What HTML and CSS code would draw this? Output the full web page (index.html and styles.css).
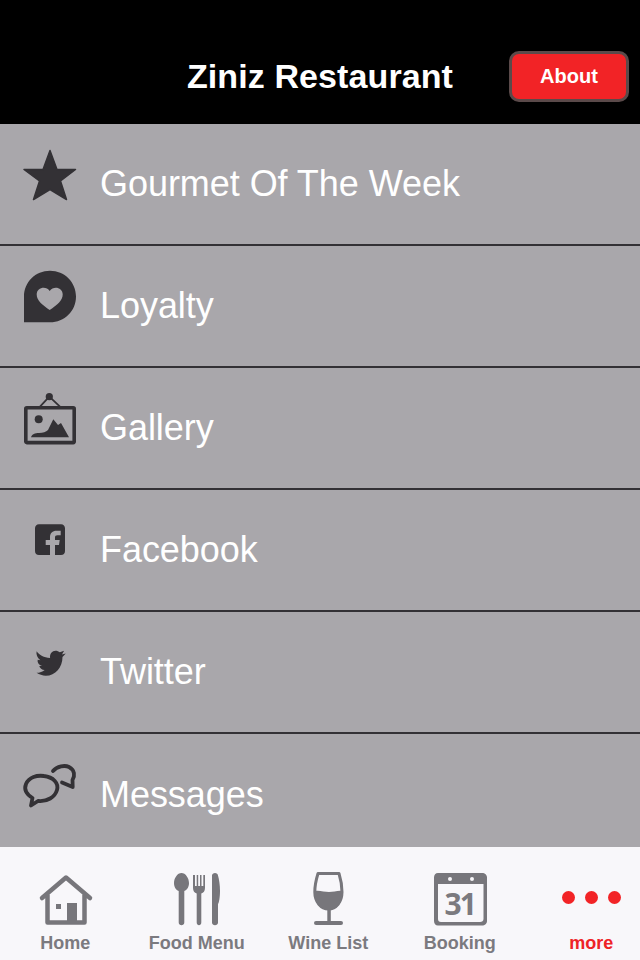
FILE: index.html
```html
<!DOCTYPE html>
<html lang="en">
<head>
  <meta charset="UTF-8" />
  <meta name="viewport" content="width=device-width, initial-scale=1" />
  <title>Ziniz Restaurant</title>
  <link rel="stylesheet" href="styles.css">
</head>
<body>

  <div class="app">
    <div class="header">
      <div class="title">Ziniz Restaurant</div>
      <button class="about">About</button>
    </div>

    <div class="list">
      <div class="row">
        <svg class="row-icon" viewBox="0 0 60 60"><path fill="#333135" stroke="#333135" stroke-width="1.500" stroke-linejoin="round" d="M30 5.500 37 24.500H55.500L40.500 36 46.500 54.500 30 44.500 13.500 54.500 19.500 36 4 24.500H23z"/></svg>
        <span class="row-text">Gourmet Of The Week</span>
      </div>
      <div class="row">
        <svg class="row-icon" viewBox="0 0 60 60"><path fill="#333135" fill-rule="evenodd" d="M4 29.500C4 15 15.500 3.700 30 3.700S56 15 56 29.500 44.500 55.300 30 55.300H4zM29.700 43C37 38 42.700 33.500 42.700 27.500 42.700 20.500 33.500 18.500 29.700 24 26 18.500 16.700 20.500 16.700 27.500 16.700 33.500 22.500 38 29.700 43z"/></svg>
        <span class="row-text">Loyalty</span>
      </div>
      <div class="row">
        <svg class="row-icon" viewBox="0 0 60 60">
          <circle cx="29.300" cy="7.700" r="3.600" fill="#333135"/>
          <path d="M29.300 7.700 20 17.700M29.300 7.700 40 17.700" stroke="#333135" stroke-width="1.800" fill="none"/>
          <rect x="5.800" y="18.800" width="48.400" height="34.800" rx="1" fill="none" stroke="#333135" stroke-width="3.600"/>
          <circle cx="18.700" cy="30.300" r="4" fill="#333135"/>
          <path fill="#333135" d="M11 48.300C12 45 15 44 19 44 23 44 26 43 28 41L33.300 30.300 38 36 41 34 49 48.300z"/>
        </svg>
        <span class="row-text">Gallery</span>
      </div>
      <div class="row">
        <svg class="row-icon" viewBox="0 0 60 60"><path fill="#333135" fill-rule="evenodd" d="M19 13.300H41C43.500 13.300 45 15 45 17.300V40C45 42.500 43.500 44 41 44H35V34H39L39.700 29H35V26.500C35 25 35.700 24.300 37.500 24.300H40.700V19.700H36.500C32.500 19.700 30 22 30 26V29H25.700V34H30V44H19C16.500 44 15 42.500 15 40V17.300C15 15 16.500 13.300 19 13.300z"/></svg>
        <span class="row-text">Facebook</span>
      </div>
      <div class="row">
        <svg class="row-icon" viewBox="0 0 60 60"><path fill="#333135" transform="translate(15.500 12.500) scale(0.54 0.57)" d="M2 10c6 7 13 11 25 12-1-8 4-13 10-13 3 0 6 1 8 3l8-3-4 7 7-2-6 6c0 18-13 33-31 33-6 0-12-2-17-5 6 0 11-2 15-5-5 0-9-3-10-7h5C6 34 3 30 4 25l5 1C3 21 1 16 2 10z"/></svg>
        <span class="row-text">Twitter</span>
      </div>
      <div class="row">
        <svg class="row-icon" viewBox="0 0 60 60" fill="none" stroke="#333135" stroke-width="3.800" stroke-linejoin="round" stroke-linecap="round">
          <path d="M11 49.500 12.500 42C6 38 4 33 6 28 9 21 17 19 24 20 33 21 39 27 37 34 35 41 27 46 18 45z"/>
          <path d="M33 15C37 10 45 9 49 11 55 14 55 20 52.500 24L52.700 31 42 26.500"/>
        </svg>
        <span class="row-text">Messages</span>
      </div>
    </div>

    <div class="tabs">
      <div class="tab">
        <svg class="tab-icon" viewBox="0 0 60 60"><path fill="none" stroke="#77767b" stroke-width="4.500" stroke-linejoin="round" stroke-linecap="round" d="M7 27 31 6.500 55 27M12.500 24V51.500H49.500V24"/><path fill="#77767b" d="M32 32H42V52H32zM21 33H26V38H21z"/></svg>
        <span>Home</span>
      </div>
      <div class="tab">
        <svg class="tab-icon" viewBox="0 0 60 60"><path fill="#77767b" d="M14.500 2C18.500 2 22 7 22 12 22 16 20 19 17.300 20V51.500C17.300 55 11.700 55 11.700 51.500V20C9 19 7 16 7 12 7 7 10.500 2 14.500 2zM26 4H28V15H29.700V4H31.200V15H33V4H34.500V15H36.300V4H38V17C38 20 36.500 22 34.300 22.500V51.500C34.300 55 29.700 55 29.700 51.500V22.500C27.500 22 26 20 26 17zM45 4.500C45 1 51 1 51 4.500 52 8 53 14 53 20 53 26 52 32 51 33V51.500C51 55 45 55 45 51.500z"/></svg>
        <span>Food Menu</span>
      </div>
      <div class="tab">
        <svg class="tab-icon" viewBox="0 0 60 60"><path fill="none" stroke="#77767b" stroke-width="3" stroke-linejoin="round" d="M20 2.500H41C43 9 44 15 44 21 44 31 38 38 30.500 38 23 38 16.800 31 16.800 21 16.800 15 18 9 20 2.500z"/><path fill="#77767b" d="M16 20C22 19 26 21 31 21 36 21 40 19 45 20 45 31 39 39 31 39 22 39 16 31 16 20zM29.300 38H32.800V51H29.300z"/><rect x="16" y="50" width="29" height="4" rx="2" fill="#77767b"/></svg>
        <span>Wine List</span>
      </div>
      <div class="tab">
        <svg class="tab-icon" viewBox="0 0 60 60"><path fill="#77767b" fill-rule="evenodd" d="M8 2H52C55 2 57 4 57 6.500V50C57 52.500 55 54.500 52 54.500H8C5.500 54.500 4 52.500 4 50V6.500C4 4 5.500 2 8 2zM8 13V48C8 50 9 51 11 51H50C52 51 53.500 50 53.500 48V13zM20 6A2 2 0 1 0 20 10 2 2 0 0 0 20 6zM42 6A2 2 0 1 0 42 10 2 2 0 0 0 42 6z"/></svg>
        <span class="cal-day">31</span>
        <span>Booking</span>
      </div>
      <div class="tab more">
        <div class="dots"><i></i><i></i><i></i></div>
        <span>more</span>
      </div>
    </div>
  </div>

</body>
</html>
```

FILE: styles.css
```css
* {
  box-sizing: border-box;
  margin: 0;
  padding: 0;
}
body {
  font-family: 'Liberation Sans', Arial, sans-serif;
  background: #000;
  overflow: hidden;
}
.app {
  width: 640px;
  height: 960px;
  display: flex;
  flex-direction: column;
  overflow: hidden;
}
.header {
  height: 124px;
  flex: none;
  background: #000;
  position: relative;
  padding-top: 40px;
  text-align: center;
}
.title {
  color: #fff;
  font-size: 34px;
  font-weight: bold;
  line-height: 72px;
  letter-spacing: 0.1px;
}
.about {
  position: absolute;
  left: 509px;
  top: 51px;
  width: 120px;
  height: 51px;
  background: #f22326;
  color: #fff;
  border: 3px solid #5b4a4a;
  border-radius: 10px;
  font-family: inherit;
  font-size: 20px;
  font-weight: bold;
}
.list {
  flex: 1;
  background: #a9a7ab;
  overflow: hidden;
}
.row {
  height: 122px;
  display: flex;
  align-items: center;
  padding-left: 20px;
  border-bottom: 2px solid #333135;
}
.row:last-child {
  border-bottom: none;
}
.row-icon {
  width: 60px;
  height: 60px;
  flex: none;
  margin-top: -18px;
}
.row-text {
  color: #fff;
  font-size: 36px;
  letter-spacing: -0.05px;
  margin-left: 20px;
}
.tabs {
  height: 113px;
  flex: none;
  background: #f8f7fa;
  display: flex;
  margin-left: -0.5px;
}
.tab {
  width: 131.5px;
  flex: none;
  position: relative;
  display: flex;
  flex-direction: column;
  align-items: center;
  padding-top: 24px;
  color: #7b7a7f;
  font-size: 18px;
  font-weight: bold;
}
.tab-icon {
  width: 60px;
  height: 60px;
  margin-bottom: 2px;
}
.cal-day {
  position: absolute;
  top: 42px;
  font-family: 'Open Sans', sans-serif;
  font-size: 30px;
  line-height: 30px;
  letter-spacing: -2px;
}
.more {
  color: #ee2326;
}
.dots {
  height: 52px;
  margin-bottom: 10px;
  display: flex;
  gap: 10px;
  align-items: center;
}
.dots i {
  width: 13px;
  height: 13px;
  border-radius: 50%;
  background: #f22326;
}
```
